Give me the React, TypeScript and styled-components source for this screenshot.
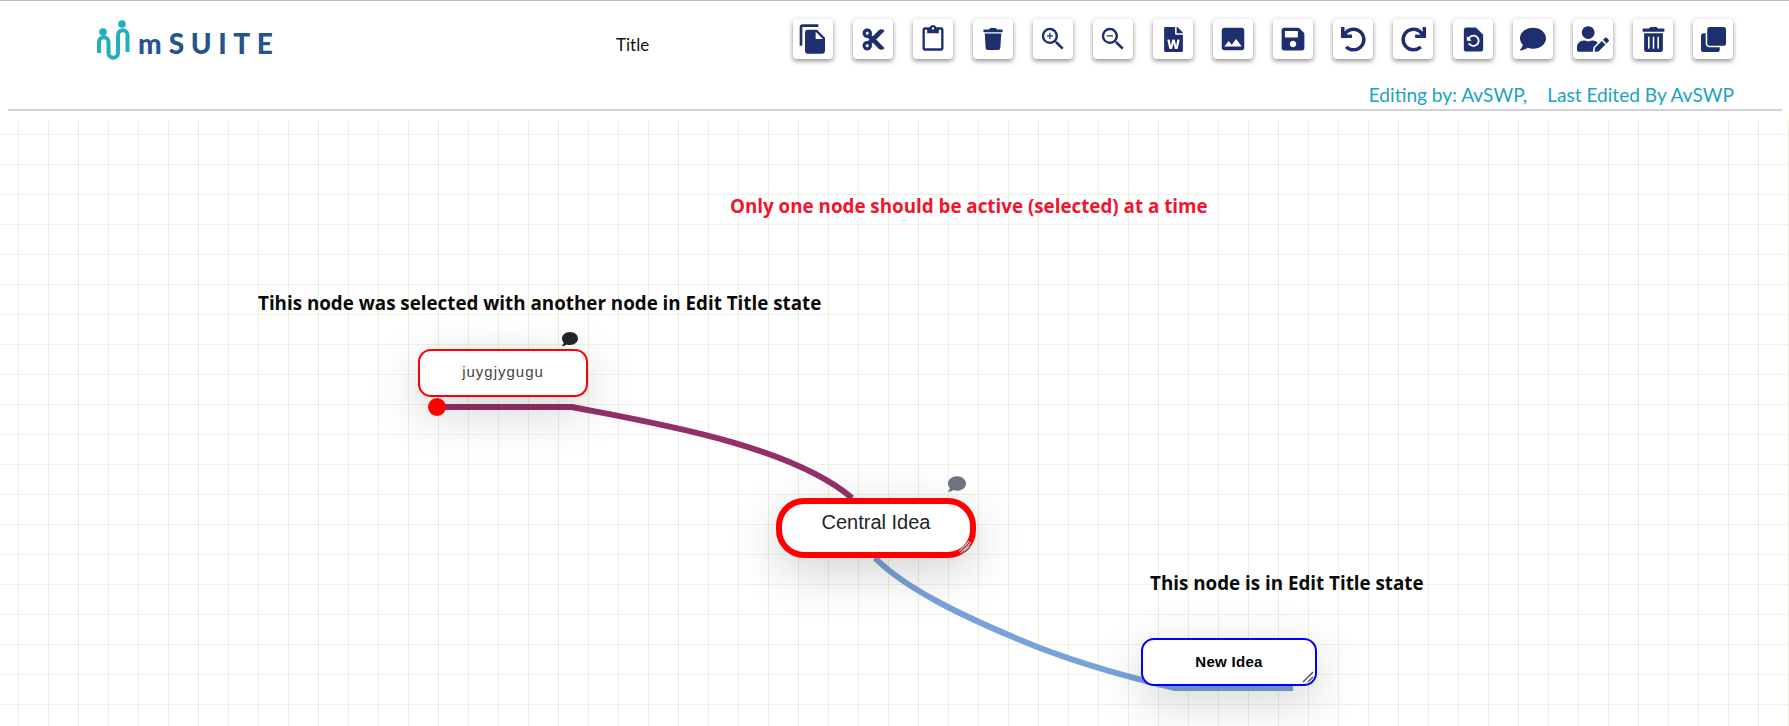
import React, { FunctionComponent } from 'react';
import styled, { createGlobalStyle } from 'styled-components';
import {
  MdFileCopy,
  MdContentPaste,
  MdZoomIn,
  MdZoomOut,
  MdImage,
  MdRestorePage,
} from 'react-icons/md';
import {
  FaCut,
  FaTrash,
  FaFileWord,
  FaSave,
  FaUndo,
  FaRedo,
  FaComment,
  FaUserEdit,
  FaTrashAlt,
  FaClone,
} from 'react-icons/fa';

const GlobalStyle = createGlobalStyle`
  html, body {
    margin: 0;
    padding: 0;
    background: #fff;
  }
`;

const Page = styled.div`
  width: 1789px;
  height: 726px;
  overflow: hidden;
  display: flex;
  flex-direction: column;
  border-top: 1px solid #bdbdbd;
  box-sizing: border-box;
  font-family: 'Liberation Sans', Arial, sans-serif;
`;

const Header = styled.header`
  height: 110px;
  margin: 0 7px 0 8px;
  flex-shrink: 0;
  box-sizing: border-box;
  border-bottom: 2px solid #d3d3d3;
  display: flex;
  flex-direction: column;
`;

const TopRow = styled.div`
  display: flex;
  align-items: flex-start;
  padding-top: 18px;
`;

const LogoWrap = styled.div`
  width: 608px;
  padding-left: 88px;
  box-sizing: border-box;
  display: flex;
  align-items: center;
  height: 44px;
`;

const LogoText = styled.span`
  font-family: 'Lato', sans-serif;
  font-weight: 900;
  font-size: 28px;
  color: #255390;
  margin-left: 6px;
  margin-top: 4px;
  line-height: 1;
`;

const LogoCaps = styled.span`
  letter-spacing: 6.6px;
  margin-left: 7px;
`;

const DocTitle = styled.div`
  width: 177px;
  font-family: 'Lato', sans-serif;
  font-size: 17px;
  color: #111;
  line-height: 52px;
`;

const Toolbar = styled.div`
  display: flex;
  gap: 20px;
`;

const ToolButton = styled.button`
  width: 40px;
  height: 40px;
  padding: 0;
  border: none;
  border-radius: 4px;
  background: #fff;
  color: #1d2f6f;
  box-shadow: 0 2px 5px rgba(0, 0, 0, 0.45);
  display: flex;
  align-items: center;
  justify-content: center;
`;

const StatusRow = styled.div`
  display: flex;
  justify-content: flex-end;
  gap: 20px;
  padding-right: 48px;
  margin-top: 13px;
  font-family: 'Lato', sans-serif;
  font-size: 19.1px;
  line-height: 22px;
  color: #1ba3bf;
`;

const Canvas = styled.main`
  position: relative;
  flex: 1;
  margin-top: 9px;
  background-color: #fff;
  background-image:
    linear-gradient(to right, #e9f1da 1.5px, transparent 1.5px),
    linear-gradient(to bottom, #eef4e3 1.5px, transparent 1.5px);
  background-size: 30px 30px;
  background-position: 18px 14px;
`;

const Connectors = styled.svg`
  position: absolute;
  left: 0;
  top: 0;
`;

const Note = styled.div<{ $x: number; $y: number; $red?: boolean }>`
  position: absolute;
  left: ${(p) => p.$x}px;
  top: ${(p) => p.$y}px;
  font-family: 'Open Sans', sans-serif;
  font-weight: 700;
  font-size: 18.8px;
  line-height: 24px;
  white-space: nowrap;
  color: ${(p) => (p.$red ? '#f0142f' : '#0a0a0a')};
`;

const Node = styled.div<{
  $x: number;
  $y: number;
  $w: number;
  $h: number;
  $border: number;
  $radius: number;
  $color: string;
}>`
  position: absolute;
  left: ${(p) => p.$x}px;
  top: ${(p) => p.$y}px;
  width: ${(p) => p.$w}px;
  height: ${(p) => p.$h}px;
  box-sizing: border-box;
  border: ${(p) => p.$border}px solid ${(p) => p.$color};
  border-radius: ${(p) => p.$radius}px;
  background: #fff;
  box-shadow: 0 14px 50px rgba(0, 0, 0, 0.18);
  display: flex;
  justify-content: center;
`;

const NodeLabel = styled.span<{ $size: number; $top: number; $bold?: boolean; $color: string; $spacing?: number }>`
  margin-top: ${(p) => p.$top}px;
  font-size: ${(p) => p.$size}px;
  font-weight: ${(p) => (p.$bold ? 700 : 400)};
  color: ${(p) => p.$color};
  letter-spacing: ${(p) => p.$spacing ?? 0}px;
  line-height: 1.2;
`;

const CommentBadge = styled.span<{ $right: number; $top: number; $color: string }>`
  position: absolute;
  right: ${(p) => p.$right}px;
  top: ${(p) => p.$top}px;
  color: ${(p) => p.$color};
  display: flex;
`;

const ResizeHandle = styled.svg<{ $offset: number }>`
  position: absolute;
  right: ${(p) => p.$offset}px;
  bottom: ${(p) => p.$offset}px;
`;

const Dot = styled.span`
  position: absolute;
  left: 428px;
  top: 278px;
  width: 18px;
  height: 18px;
  border-radius: 50%;
  background: #ff0000;
`;

const tools = [
  <MdFileCopy size={32} />,
  <FaCut size={25} />,
  <MdContentPaste size={28} />,
  <FaTrash size={22} />,
  <MdZoomIn size={30} />,
  <MdZoomOut size={30} />,
  <FaFileWord size={25} />,
  <MdImage size={30} />,
  <FaSave size={26} />,
  <FaUndo size={25} />,
  <FaRedo size={25} />,
  <MdRestorePage size={29} />,
  <FaComment size={26} />,
  <FaUserEdit size={32} />,
  <FaTrashAlt size={25} />,
  <FaClone size={25} />,
];

const Logo = () => (
  <svg width="36" height="44" viewBox="96 20 36 44">
    <circle cx="103" cy="33" r="3.8" fill="#20b0bb" />
    <circle cx="122" cy="25" r="3.8" fill="#20b0bb" />
    <path
      d="M99 54 V43 A4.75 4.75 0 0 1 108.5 43 V54 A4.75 4.75 0 0 0 118 54 V36 A4.75 4.75 0 0 1 127.5 36 V53"
      fill="none"
      stroke="#20b0bb"
      strokeWidth="4"
    />
  </svg>
);

const Handle = ({ size, offset }: { size: number; offset: number }) => (
  <ResizeHandle $offset={offset} width={size} height={size} viewBox="0 0 12 12">
    <path d="M1 11 L11 1 M6 11 L11 6" stroke="#fff" strokeWidth="3" fill="none" />
    <path d="M1 11 L11 1 M6 11 L11 6" stroke="#444" strokeWidth="1.3" fill="none" />
  </ResizeHandle>
);

const App: FunctionComponent = function () {
  return (
    <Page>
      <GlobalStyle />
      <Header>
        <TopRow>
          <LogoWrap>
            <Logo />
            <LogoText>
              m<LogoCaps>SUITE</LogoCaps>
            </LogoText>
          </LogoWrap>
          <DocTitle>Title</DocTitle>
          <Toolbar>
            {tools.map((icon, i) => (
              <ToolButton key={i}>{icon}</ToolButton>
            ))}
          </Toolbar>
        </TopRow>
        <StatusRow>
          <span>Editing by: AvSWP,</span>
          <span>Last Edited By AvSWP</span>
        </StatusRow>
      </Header>

      <Canvas>
        <Connectors width="1789" height="606" viewBox="0 120 1789 606">
          <path
            d="M437 407 L572 407 C650 422 790 445 852 498"
            fill="none"
            stroke="#93306a"
            strokeWidth="6"
          />
          <path
            d="M875 558 C905 588 960 616 1040 648 C1090 667 1140 680 1175 688 L1293 688"
            fill="none"
            stroke="#77a3da"
            strokeWidth="6"
          />
        </Connectors>

        <Note $x={730} $y={74} $red>
          Only one node should be active (selected) at a time
        </Note>
        <Note $x={258} $y={171}>
          Tihis node was selected with another node in Edit Title state
        </Note>
        <Note $x={1150} $y={451}>
          This node is in Edit Title state
        </Note>

        <Node $x={418} $y={229} $w={170} $h={48} $border={2} $radius={13} $color="#ff0000">
          <NodeLabel $size={15} $top={12} $color="#444" $spacing={1}>
            juygjygugu
          </NodeLabel>
          <CommentBadge $right={8} $top={-20} $color="#212529">
            <FaComment size={16} />
          </CommentBadge>
        </Node>
        <Dot />

        <Node $x={776} $y={378} $w={200} $h={60} $border={6} $radius={28} $color="#ff0000">
          <NodeLabel $size={20} $top={6} $color="#212529">
            Central Idea
          </NodeLabel>
          <CommentBadge $right={4} $top={-29} $color="#6c757d">
            <FaComment size={18} />
          </CommentBadge>
          <Handle size={12} offset={-1} />
        </Node>

        <Node $x={1141} $y={518} $w={176} $h={48} $border={2} $radius={13} $color="#0000ff">
          <NodeLabel $size={15} $top={13} $bold $color="#000" $spacing={0.3}>
            New Idea
          </NodeLabel>
          <Handle size={12} offset={1} />
        </Node>
      </Canvas>
    </Page>
  );
};

export default App;
